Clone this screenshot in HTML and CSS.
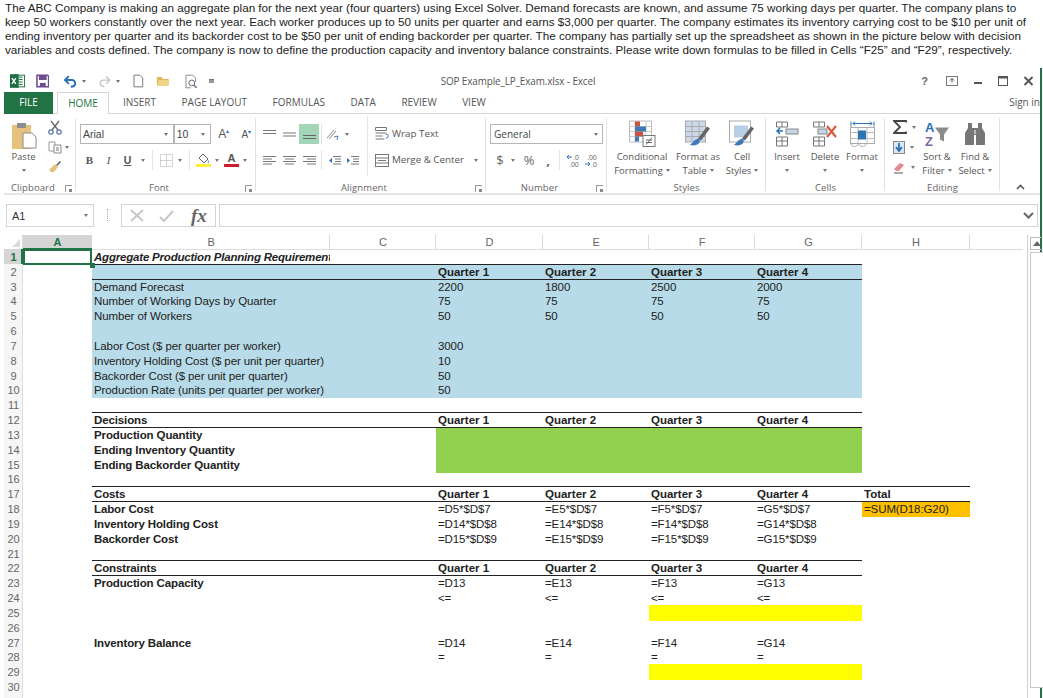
FILE: index.html
```html
<!DOCTYPE html>
<html lang="en">
<head>
<meta charset="utf-8">
<title>SOP Example</title>
<link rel="stylesheet" href="styles.css">
</head>
<body>
<p class="question">The ABC Company is making an aggregate plan for the next year (four quarters) using Excel Solver. Demand forecasts are known, and assume 75 working days per quarter. The company plans to keep 50 workers constantly over the next year. Each worker produces up to 50 units per quarter and earns $3,000 per quarter. The company estimates its inventory carrying cost to be $10 per unit of ending inventory per quarter and its backorder cost to be $50 per unit of ending backorder per quarter. The company has partially set up the spreadsheet as shown in the picture below with decision variables and costs defined. The company is now to define the production capacity and inventory balance constraints. Please write down formulas to be filled in Cells “F25” and “F29”, respectively.</p>
<div class="window">
  <div class="titlebar">
    <div class="qat">
      <svg class="q-excel" width="16" height="14" viewBox="0 0 16 14"><rect x="5" y="1" width="10" height="12" fill="#fff" stroke="#217346"/><path d="M9 3h4M9 5.500h4M9 8h4M9 10.500h4" stroke="#217346"/><rect width="9" height="14" fill="#1d6f42"/><path d="M2 4l4 6M6 4l-4 6" stroke="#fff" stroke-width="1.400"/></svg>
      <svg class="q-save" width="14" height="14" viewBox="0 0 14 14"><path d="M1 1h11l1 1v11H1z" fill="#fff" stroke="#6b4c8c" stroke-width="1.600"/><path d="M3 1h8v5H3z" fill="#6b4c8c"/><path d="M4 9h6v4H4z" fill="#6b4c8c"/></svg>
      <svg class="q-undo" width="14" height="13" viewBox="0 0 14 13"><path d="M6 1L2 5l4 4" fill="none" stroke="#2a71b8" stroke-width="2"/><path d="M2.500 5H9c5 0 5 7-1 7" fill="none" stroke="#2a71b8" stroke-width="2"/></svg>
      <span class="caret q-c1"></span>
      <svg class="q-redo" width="13" height="13" viewBox="0 0 14 13"><path d="M8 1l4 4-4 4" fill="none" stroke="#c4c4c4" stroke-width="1.600"/><path d="M11.500 5H5c-5 0-5 7 1 7" fill="none" stroke="#c4c4c4" stroke-width="1.600"/></svg>
      <span class="caret q-c2"></span>
      <svg class="q-new" width="11" height="14" viewBox="0 0 11 14"><path d="M1 1h6l3 3v9H1z" fill="#fff" stroke="#777"/></svg>
      <svg class="q-open" width="15" height="12" viewBox="0 0 15 12"><path d="M1 2h5l1 2h6v7H1z" fill="#e0b75c"/><path d="M3 5h11l-2 6H1z" fill="#f0d48a"/></svg>
      <svg class="q-print" width="13" height="15" viewBox="0 0 13 15"><path d="M1 1h7l3 3v4M1 1v13h5" fill="#fff" stroke="#888"/><circle cx="7" cy="9" r="3" fill="#fff" stroke="#667"/><path d="M9 11l3 3" stroke="#667" stroke-width="1.500"/></svg>
      <span class="q-more"></span>
    </div>
    <div class="doc-title">SOP Example_LP_Exam.xlsx - Excel</div>
    <div class="win-ctrl">
      <span class="help">?</span>
      <svg width="12" height="10" viewBox="0 0 12 10"><rect x=".5" y=".5" width="11" height="9" fill="none" stroke="#777"/><path d="M6 2.500v4M4 4.500l2-2 2 2" stroke="#555" fill="none"/></svg>
      <svg width="10" height="10" viewBox="0 0 10 10"><path d="M1 7h8" stroke="#555" stroke-width="2"/></svg>
      <svg width="10" height="10" viewBox="0 0 10 10"><rect x=".5" y=".5" width="9" height="9" fill="none" stroke="#555"/><path d="M0 1.500h10" stroke="#555" stroke-width="2"/></svg>
      <svg width="11" height="10" viewBox="0 0 11 10"><path d="M1.500 1l8 8M9.500 1l-8 8" stroke="#555" stroke-width="1.800"/></svg>
    </div>
  </div>
  <div class="tabs">
    <div class="tab file">FILE</div>
    <div class="tab home">HOME</div>
    <div class="tab first">INSERT</div>
    <div class="tab">PAGE LAYOUT</div>
    <div class="tab">FORMULAS</div>
    <div class="tab">DATA</div>
    <div class="tab">REVIEW</div>
    <div class="tab">VIEW</div>
    <div class="signin">Sign in</div>
  </div>
  <div class="ribbon">
    <section class="group g-clip">
      <div class="gbody clip-body">
        <div class="big paste">
          <svg class="big-ico" width="26" height="28" viewBox="0 0 26 28"><rect x="1" y="3" width="19" height="24" fill="#e6c27e"/><rect x="6" y="1" width="9" height="5" fill="#8d8d8d"/><path d="M12 11h9l4 4v11H12z" fill="#fff" stroke="#8c8c8c"/></svg>
          <span>Paste</span>
          <span class="caret solo"></span>
        </div>
        <div class="clip-tools">
          <svg width="14" height="15" viewBox="0 0 14 15"><path d="M3 1l7 9M11 1L4 10" stroke="#666" stroke-width="1.300"/><circle cx="3" cy="12" r="2.200" fill="none" stroke="#5377a8" stroke-width="1.200"/><circle cx="11" cy="12" r="2.200" fill="none" stroke="#5377a8" stroke-width="1.200"/></svg>
          <div class="copy-line"><svg width="14" height="13" viewBox="0 0 14 13"><path d="M1 1h6v9H1z" fill="#fff" stroke="#999"/><path d="M6 4h7v8H6z" fill="#fff" stroke="#888"/><path d="M8 7h3M8 9h3" stroke="#777"/></svg><span class="caret"></span></div>
          <svg width="14" height="13" viewBox="0 0 14 13"><path d="M8 5l4-4 1 1-4 4z" fill="#555"/><path d="M1 10l6-6 3 3-4 5H3z" fill="#e5c07b"/></svg>
        </div>
      </div>
      <div class="glabel launch"><span>Clipboard</span><i class="launcher"></i></div>
    </section>

    <section class="group g-font">
      <div class="gbody two-rows font-body">
        <div class="r1">
          <div class="combo font-name"><span>Arial</span><span class="caret"></span></div>
          <div class="combo font-size"><span>10</span><span class="caret"></span></div>
          <div class="grow-a">A<sup>▴</sup></div>
          <div class="grow-a small-a">A<sup>▾</sup></div>
        </div>
        <div class="r2">
          <b class="fb">B</b><i class="fb fi">I</i><u class="fb">U</u><span class="fa"><span class="caret"></span></span>
          <span class="vsep"></span>
          <svg class="f-border" width="13" height="13" viewBox="0 0 13 13"><path d="M.5.500h12v12H.5zM6.500.5v12M.5 6.500h12" fill="none" stroke="#aaa" stroke-dasharray="1 1"/></svg><span class="fa"><span class="caret"></span></span>
          <span class="vsep"></span>
          <div class="f-fill"><svg width="13" height="11" viewBox="0 0 13 11"><path d="M6 1l5 5-4 4-5-5z" fill="#fff" stroke="#666"/><path d="M11 7c1 1 1.500 2 .8 3-1 .5-1.500-1-.8-3z" fill="#6a9bd1"/></svg><span class="bar yellowbar"></span></div><span class="fa"><span class="caret"></span></span>
          <div class="f-color"><span class="ca">A</span><span class="bar redbar"></span></div><span class="fa"><span class="caret"></span></span>
        </div>
      </div>
      <div class="glabel launch"><span>Font</span><i class="launcher"></i></div>
    </section>

    <section class="group g-align">
      <div class="gbody align-body">
        <div class="two-rows align-left">
          <div class="r1">
            <span class="ab"><svg width="13" height="11" viewBox="0 0 13 11"><path d="M0 1.500h13M0 4.500h13" stroke="#777"/></svg></span>
            <span class="ab"><svg width="13" height="11" viewBox="0 0 13 11"><path d="M0 4h13M0 7h13" stroke="#777"/></svg></span>
            <span class="ab on"><svg width="13" height="11" viewBox="0 0 13 11"><path d="M0 6.500h13M0 9.500h13" stroke="#666"/></svg></span>
            <span class="vsep tall"></span>
            <span class="ab orient"><svg width="14" height="13" viewBox="0 0 14 13"><path d="M1 10L8 2M3 11l7-8" stroke="#888"/><path d="M8 9l4-1-1 4" fill="none" stroke="#5377a8"/></svg></span><span class="fa"><span class="caret"></span></span>
          </div>
          <div class="r2">
            <span class="ab"><svg width="13" height="9" viewBox="0 0 13 9"><path d="M0 .5h13M0 3h9M0 5.500h13M0 8h9" stroke="#777"/></svg></span>
            <span class="ab"><svg width="13" height="9" viewBox="0 0 13 9"><path d="M0 .5h13M2 3h9M0 5.500h13M2 8h9" stroke="#777"/></svg></span>
            <span class="ab"><svg width="13" height="9" viewBox="0 0 13 9"><path d="M0 .5h13M4 3h9M0 5.500h13M4 8h9" stroke="#777"/></svg></span>
            <span class="vsep tall"></span>
            <span class="ab indent"><svg width="13" height="9" viewBox="0 0 13 9"><path d="M5 .5h8M7 3h6M7 5.500h6M5 8h8" stroke="#777"/><path d="M4 2L1 4.500 4 7z" fill="#2a71b8"/></svg></span>
            <span class="ab indent"><svg width="13" height="9" viewBox="0 0 13 9"><path d="M5 .5h8M7 3h6M7 5.500h6M5 8h8" stroke="#777"/><path d="M1 2l3 2.500L1 7z" fill="#2a71b8"/></svg></span>
          </div>
        </div>
        <div class="two-rows align-right">
          <div class="r1 wrap"><svg width="15" height="14" viewBox="0 0 15 14"><path d="M.5.500h11v3H.5zM.5 6h11M.5 9h7M.5 12h9" fill="none" stroke="#777"/><path d="M11 7c3 0 3 4 0 4" fill="none" stroke="#2a71b8"/></svg><span>Wrap Text</span></div>
          <div class="r2 wrap"><svg width="15" height="13" viewBox="0 0 15 13"><rect x=".5" y=".5" width="13" height="12" fill="#fff" stroke="#777"/><path d="M.5 4h13M.5 9h13M3 6.500h8" stroke="#777"/></svg><span>Merge &amp; Center</span><span class="caret merge-c"></span></div>
        </div>
      </div>
      <div class="glabel launch"><span>Alignment</span><i class="launcher"></i></div>
    </section>

    <section class="group g-num">
      <div class="gbody two-rows num-body">
        <div class="r1"><div class="combo general"><span>General</span><span class="caret"></span></div></div>
        <div class="r2 num-row">
          <span class="nb dollar">$</span><span class="fa"><span class="caret"></span></span>
          <span class="nb pct">%</span>
          <span class="nb comma">,</span>
          <span class="vsep"></span>
          <svg class="dec" width="14" height="13" viewBox="0 0 14 13"><path d="M6 3H1M3 1L1 3l2 2" fill="none" stroke="#2a71b8"/><text x="7" y="6" class="dtxt">.0</text><text x="3" y="12.500" class="dtxt">.00</text></svg>
          <svg class="dec" width="14" height="13" viewBox="0 0 14 13"><text x="3" y="6" class="dtxt">.00</text><path d="M1 10h5M4 8l2 2-2 2" fill="none" stroke="#2a71b8"/><text x="7" y="12.500" class="dtxt">.0</text></svg>
        </div>
      </div>
      <div class="glabel launch"><span>Number</span><i class="launcher"></i></div>
    </section>

    <section class="group g-styles">
      <div class="gbody big-row">
        <div class="big w66">
          <svg class="big-ico" width="27" height="27" viewBox="0 0 27 27"><path d="M.5.500h22v21H.5z" fill="#fff" stroke="#bbb"/><path d="M6 .5v21M17 .5v21M.5 6h22M.5 11h22M.5 16h22" stroke="#ccc"/><rect x="6" y="1" width="5" height="5" fill="#c8533f"/><rect x="6" y="6" width="11" height="5" fill="#3f7ab8"/><rect x="6" y="11" width="8" height="5" fill="#c8533f"/><rect x="6" y="16" width="4" height="5" fill="#3f7ab8"/><rect x="14" y="15" width="12" height="11" fill="#fff" stroke="#777"/><path d="M17 24l6-7M17 19.500h6M17 22h6" stroke="#666" fill="none"/></svg>
          <span>Conditional</span><span>Formatting<i class="caret inl"></i></span>
        </div>
        <div class="big w46">
          <svg class="big-ico" width="27" height="27" viewBox="0 0 27 27"><rect x=".5" y=".5" width="20" height="21" fill="#ccd9ea" stroke="#aaa"/><path d="M7 1v20M14 1v20M1 6h20M1 11h20M1 16h20" stroke="#aaa"/><path d="M25 8L16 20l-3-2 9-12z" fill="#666"/><path d="M14 18c2 3 0 7-6 7-2 0-3-1-3-1 3-1 3-5 9-6z" fill="#3f7ab8"/></svg>
          <span>Format as</span><span>Table<i class="caret inl"></i></span>
        </div>
        <div class="big w42">
          <svg class="big-ico" width="27" height="27" viewBox="0 0 27 27"><rect x=".5" y=".5" width="21" height="21" fill="#fff" stroke="#aaa"/><rect x="5" y="5" width="14" height="12" fill="#b9cde6"/><path d="M25 8L16 20l-3-2 9-12z" fill="#666"/><path d="M14 18c2 3 0 7-6 7-2 0-3-1-3-1 3-1 3-5 9-6z" fill="#3f7ab8"/></svg>
          <span>Cell</span><span>Styles<i class="caret inl"></i></span>
        </div>
      </div>
      <div class="glabel"><span>Styles</span></div>
    </section>

    <section class="group g-cells">
      <div class="gbody big-row">
        <div class="big w38">
          <svg class="big-ico" width="24" height="26" viewBox="0 0 24 26"><path d="M1.500 1h11v5h-11zM7 1v5M1.500 16h11v9h-11zM1.500 20h11M7 16v9" fill="none" stroke="#777"/><path d="M8 10H2M5 7l-3 3 3 3" fill="none" stroke="#2a71b8" stroke-width="1.500"/><rect x="11" y="8" width="12" height="5" fill="#c5d4e6" stroke="#888"/></svg>
          <span>Insert</span><span class="caret solo"></span>
        </div>
        <div class="big w38">
          <svg class="big-ico" width="26" height="26" viewBox="0 0 26 26"><path d="M1.500 1h11v5h-11zM7 1v5M1.500 16h11v9h-11zM1.500 20h11M7 16v9" fill="none" stroke="#777"/><rect x="6" y="8" width="9" height="5" fill="#c5d4e6" stroke="#888"/><path d="M15 5l9 11M24 5l-9 11" stroke="#d9563c" stroke-width="2"/></svg>
          <span>Delete</span><span class="caret solo"></span>
        </div>
        <div class="big w36">
          <svg class="big-ico" width="25" height="27" viewBox="0 0 25 27"><path d="M1 1v5M24 1v5M3 3h19M3 3l2-2M3 3l2 2M22 3l-2-2M22 3l-2 2" fill="none" stroke="#2a71b8"/><rect x=".5" y="7" width="24" height="16" fill="#fff" stroke="#aaa"/><path d="M8 7v16M17 7v16M1 12h23M1 18h23" stroke="#bbb"/><rect x="8" y="10" width="8" height="9" fill="#2e75b6"/><path d="M1 23c0 4 7 4 7 0M9 23c0 4 7 4 7 0" fill="none" stroke="#aaa"/></svg>
          <span>Format</span><span class="caret solo"></span>
        </div>
      </div>
      <div class="glabel"><span>Cells</span></div>
    </section>

    <section class="group g-edit">
      <div class="gbody big-row edit-body">
        <div class="edit-tools">
          <div class="et"><svg width="14" height="14" viewBox="0 0 14 14"><path d="M13 2.500V1H1l6 6-6 6h12v-1.500" fill="none" stroke="#444" stroke-width="1.800"/></svg><span class="caret"></span></div>
          <div class="et"><svg width="12" height="13" viewBox="0 0 12 13"><rect x=".5" y=".5" width="11" height="12" fill="#dbe6f2" stroke="#888"/><path d="M6 2v7M3 6l3 4 3-4" fill="none" stroke="#2a71b8" stroke-width="1.800"/></svg><span class="caret"></span></div>
          <div class="et"><svg width="13" height="13" viewBox="0 0 13 13"><path d="M1 8l6-6 4 2-5 6H3z" fill="#e58a92"/><path d="M1 12h9" stroke="#555"/></svg><span class="caret"></span></div>
        </div>
        <div class="big w38">
          <svg class="big-ico" width="26" height="27" viewBox="0 0 26 27"><text x="1" y="11.500" class="az a-t">A</text><text x="1" y="25" class="az z-t">Z</text><path d="M11 7h14l-5 7v7l-4-2v-5z" fill="#8c8c8c"/></svg>
          <span>Sort &amp;</span><span>Filter<i class="caret inl"></i></span>
        </div>
        <div class="big w38">
          <svg class="big-ico" width="24" height="26" viewBox="0 0 24 26"><path d="M5 2h4v5h6V2h4v5l3 5v12h-9V14h-2v10H2V12l3-5z" fill="#777"/><path d="M12 9v4" stroke="#fff"/></svg>
          <span>Find &amp;</span><span>Select<i class="caret inl"></i></span>
        </div>
      </div>
      <div class="glabel"><span>Editing</span></div>
    </section>
    <div class="collapse"><svg width="9" height="6" viewBox="0 0 9 6"><path d="M1 5l3.500-3.500L8 5" fill="none" stroke="#555" stroke-width="1.600"/></svg></div>
  </div>

  <div class="formula">
    <div class="namebox"><span>A1</span><span class="caret"></span></div>
    <div class="grip"></div>
    <div class="fx-box">
      <svg width="14" height="13" viewBox="0 0 14 13"><path d="M1 1l12 11M13 1L1 12" stroke="#c6c6c6" stroke-width="1.800"/></svg>
      <svg width="15" height="12" viewBox="0 0 15 12"><path d="M1 7l4 4 9-10" fill="none" stroke="#c6c6c6" stroke-width="2"/></svg>
      <span class="fx">fx</span>
    </div>
    <div class="finput"><svg width="11" height="7" viewBox="0 0 11 7"><path d="M1 1l4.500 4.500L10 1" fill="none" stroke="#666" stroke-width="2"/></svg></div>
  </div>

  <div class="sheet">
    <div class="cells">
      <div class="row heads"><div class="corner"><i></i></div><div class="ch sel">A</div><div class="ch">B</div><div class="ch">C</div><div class="ch">D</div><div class="ch">E</div><div class="ch">F</div><div class="ch">G</div><div class="ch">H</div><div class="ch none"></div></div>
      <div class="row"><div class="rh sel">1</div><div class="ca1"><i class="handle"></i></div><div class="title-cell">Aggregate Production Planning Requirement</div></div>
      <div class="row"><div class="rh">2</div><div></div><div class="bl tl"></div><div class="bl tl"></div><div class="bl tl bd">Quarter 1</div><div class="bl tl bd">Quarter 2</div><div class="bl tl bd">Quarter 3</div><div class="bl tl bd">Quarter 4</div></div>
      <div class="row"><div class="rh">3</div><div></div><div class="bl tl">Demand Forecast</div><div class="bl tl"></div><div class="bl tl">2200</div><div class="bl tl">1800</div><div class="bl tl">2500</div><div class="bl tl">2000</div></div>
      <div class="row"><div class="rh">4</div><div></div><div class="bl">Number of Working Days by Quarter</div><div class="bl"></div><div class="bl">75</div><div class="bl">75</div><div class="bl">75</div><div class="bl">75</div></div>
      <div class="row"><div class="rh">5</div><div></div><div class="bl">Number of Workers</div><div class="bl"></div><div class="bl">50</div><div class="bl">50</div><div class="bl">50</div><div class="bl">50</div></div>
      <div class="row"><div class="rh">6</div><div></div><div class="bl"></div><div class="bl"></div><div class="bl"></div><div class="bl"></div><div class="bl"></div><div class="bl"></div></div>
      <div class="row"><div class="rh">7</div><div></div><div class="bl">Labor Cost ($ per quarter per worker)</div><div class="bl"></div><div class="bl">3000</div><div class="bl"></div><div class="bl"></div><div class="bl"></div></div>
      <div class="row"><div class="rh">8</div><div></div><div class="bl">Inventory Holding Cost ($ per unit per quarter)</div><div class="bl"></div><div class="bl">10</div><div class="bl"></div><div class="bl"></div><div class="bl"></div></div>
      <div class="row"><div class="rh">9</div><div></div><div class="bl">Backorder Cost ($ per unit per quarter)</div><div class="bl"></div><div class="bl">50</div><div class="bl"></div><div class="bl"></div><div class="bl"></div></div>
      <div class="row"><div class="rh">10</div><div></div><div class="bl">Production Rate (units per quarter per worker)</div><div class="bl"></div><div class="bl">50</div><div class="bl"></div><div class="bl"></div><div class="bl"></div></div>
      <div class="row"><div class="rh">11</div></div>
      <div class="row"><div class="rh">12</div><div></div><div class="tl bd lbl">Decisions</div><div class="tl"></div><div class="tl bd">Quarter 1</div><div class="tl bd">Quarter 2</div><div class="tl bd">Quarter 3</div><div class="tl bd">Quarter 4</div></div>
      <div class="row"><div class="rh">13</div><div></div><div class="tl bd lbl">Production Quantity</div><div class="tl"></div><div class="gr tl"></div><div class="gr tl"></div><div class="gr tl"></div><div class="gr tl"></div></div>
      <div class="row"><div class="rh">14</div><div></div><div class="bd lbl">Ending Inventory Quantity</div><div></div><div class="gr"></div><div class="gr"></div><div class="gr"></div><div class="gr"></div></div>
      <div class="row"><div class="rh">15</div><div></div><div class="bd lbl">Ending Backorder Quantity</div><div></div><div class="gr"></div><div class="gr"></div><div class="gr"></div><div class="gr"></div></div>
      <div class="row"><div class="rh">16</div></div>
      <div class="row"><div class="rh">17</div><div></div><div class="tl bd lbl">Costs</div><div class="tl"></div><div class="tl bd">Quarter 1</div><div class="tl bd">Quarter 2</div><div class="tl bd">Quarter 3</div><div class="tl bd">Quarter 4</div><div class="tl bd">Total</div></div>
      <div class="row"><div class="rh">18</div><div></div><div class="tl bd lbl">Labor Cost</div><div class="tl"></div><div class="tl">=D5*$D$7</div><div class="tl">=E5*$D$7</div><div class="tl">=F5*$D$7</div><div class="tl">=G5*$D$7</div><div class="tl or">=SUM(D18:G20)</div></div>
      <div class="row"><div class="rh">19</div><div></div><div class="bd lbl">Inventory Holding Cost</div><div></div><div>=D14*$D$8</div><div>=E14*$D$8</div><div>=F14*$D$8</div><div>=G14*$D$8</div></div>
      <div class="row"><div class="rh">20</div><div></div><div class="bd lbl">Backorder Cost</div><div></div><div>=D15*$D$9</div><div>=E15*$D$9</div><div>=F15*$D$9</div><div>=G15*$D$9</div></div>
      <div class="row"><div class="rh">21</div></div>
      <div class="row"><div class="rh">22</div><div></div><div class="tl bd lbl">Constraints</div><div class="tl"></div><div class="tl bd">Quarter 1</div><div class="tl bd">Quarter 2</div><div class="tl bd">Quarter 3</div><div class="tl bd">Quarter 4</div></div>
      <div class="row"><div class="rh">23</div><div></div><div class="tl bd lbl">Production Capacity</div><div class="tl"></div><div class="tl">=D13</div><div class="tl">=E13</div><div class="tl">=F13</div><div class="tl">=G13</div></div>
      <div class="row"><div class="rh">24</div><div></div><div></div><div></div><div>&lt;=</div><div>&lt;=</div><div>&lt;=</div><div>&lt;=</div></div>
      <div class="row"><div class="rh">25</div><div></div><div></div><div></div><div></div><div></div><div class="ye"></div><div class="ye"></div></div>
      <div class="row"><div class="rh">26</div></div>
      <div class="row"><div class="rh">27</div><div></div><div class="bd lbl">Inventory Balance</div><div></div><div>=D14</div><div>=E14</div><div>=F14</div><div>=G14</div></div>
      <div class="row"><div class="rh">28</div><div></div><div></div><div></div><div>=</div><div>=</div><div>=</div><div>=</div></div>
      <div class="row"><div class="rh">29</div><div></div><div></div><div></div><div></div><div></div><div class="ye"></div><div class="ye"></div></div>
      <div class="row"><div class="rh">30</div></div>
      <div class="row"><div class="rh"></div></div>
    </div>
    <div class="vscroll"><div class="up"><svg width="8" height="5" viewBox="0 0 8 5"><path d="M4 0l4 5H0z" fill="#666"/></svg></div><div class="thumb"></div></div>
  </div>
</div>
</body>
</html>
```
FILE: styles.css
```css
* { box-sizing: border-box; }
html, body { margin: 0; padding: 0; height: 698px; overflow: hidden; background: #fff; }
body { font-family: "Open Sans", "Noto Sans", sans-serif; color: #444; }
.question { margin: 0; padding: 1px 0 0 5px; width: 1034px; height: 68px; font: 11.700px/14px "Liberation Sans", Arial, sans-serif; color: #222; }
.window { margin: 0 0 0 4px; width: 1038px; height: 630px; border-right: 2px solid #217346; }

.titlebar { display: flex; height: 24px; align-items: center; padding-top: 2px; }
.qat { width: 210px; display: flex; align-items: center; padding-left: 6px; flex: none; }
.q-save { margin-left: 10px; } .q-undo { margin-left: 14px; } .q-c1 { margin-left: 5px; }
.q-redo { margin-left: 13px; } .q-c2 { margin-left: 5px; } .q-new { margin-left: 13px; }
.q-open { margin-left: 12px; } .q-print { margin-left: 14px; }
.q-more { margin-left: 12px; width: 5px; height: 4px; border-top: 1px solid #777; border-bottom: 3px solid #999; }
.doc-title { width: 608px; text-align: center; font-size: 9.900px; color: #555; letter-spacing: -.1px; }
.win-ctrl { flex: 1; display: flex; justify-content: flex-end; align-items: center; gap: 15px; padding-right: 6px; }
.help { font: bold 11px "Liberation Sans", sans-serif; color: #666; margin-right: 3px; }

.tabs { display: flex; height: 22px; border-bottom: 1px solid #d6d6d6; font-size: 10px; line-height: 21px; color: #555; }
.tab { margin-left: 25.500px; white-space: nowrap; }
.tab.file { margin-left: 0; width: 49px; background: #217346; color: #fff; text-align: center; height: 22px; }
.tab.home { margin-left: 4px; width: 52px; height: 22px; background: #fff; border: 1px solid #d6d6d6; border-bottom: 0; color: #217346; text-align: center; }
.tab.first { margin-left: 14px; }
.signin { margin-left: auto; }

.ribbon { display: flex; height: 81px; border-bottom: 2px solid #e6e6e6; font-size: 9.500px; line-height: 14px; color: #555; }
.group { display: flex; flex-direction: column; position: relative; height: 79px; flex: none; padding-top: 2px; }
.group::after { content: ""; position: absolute; right: 0; top: 4px; width: 1px; height: 73px; background: #e2e2e2; }
.gbody { height: 66px; flex: none; }
.glabel { height: 12px; display: flex; align-items: center; justify-content: center; color: #666; letter-spacing: .1px; }
.glabel span { flex: 1; text-align: center; }
.launcher { width: 7px; height: 7px; margin: 0 4px 0 3px; border: 1px solid #999; border-width: 1px 0 0 1px; position: relative; }
.launcher::after { content: ""; position: absolute; right: 0; bottom: 0; width: 3px; height: 3px; background: #888; }
.g-clip { width: 72px; } .g-font { width: 180px; } .g-align { width: 230px; }
.g-num { width: 121px; } .g-styles { width: 159px; } .g-cells { width: 119px; } .g-edit { width: 115px; }

.caret { display: inline-block; width: 0; height: 0; border: 2.500px solid transparent; border-top: 3px solid #777; border-bottom: 0; flex: none; }
.caret.inl { margin-left: 3px; vertical-align: 2px; }
.caret.solo { margin-top: 5px; }

.big { display: flex; flex-direction: column; align-items: center; white-space: nowrap; padding-top: 4px; flex: none; }
.big-ico { height: 28px; margin-bottom: 2px; flex: none; }
.big-row { display: flex; padding-left: 2px; }
.w66 { width: 66px; } .w46 { width: 46px; } .w42 { width: 42px; } .w38 { width: 38px; } .w36 { width: 36px; }

.clip-body { display: flex; padding-left: 3px; }
.paste { width: 33px; padding-top: 6px; }
.paste .big-ico { margin-bottom: 0; margin-left: 1px; }
.clip-tools { display: flex; flex-direction: column; padding: 4px 0 0 8px; gap: 6px; }
.copy-line { display: flex; align-items: center; gap: 3px; }

.two-rows { display: flex; flex-direction: column; }
.r1 { display: flex; align-items: center; height: 20px; margin-top: 8px; flex: none; }
.r2 { display: flex; align-items: center; height: 20px; margin-top: 6px; flex: none; }
.font-body { padding-left: 4px; }
.combo { display: flex; align-items: center; justify-content: space-between; height: 20px; border: 1px solid #b5b5b5; padding: 0 5px 0 2px; font-size: 9.500px; color: #444; background: #fff; }
.font-name { width: 96px; font-family: "Liberation Sans", sans-serif; font-size: 10.500px; }
.font-size { width: 38px; font-family: "Liberation Sans", sans-serif; font-size: 10.500px; }
.grow-a { width: 20px; margin-left: 3px; text-align: center; font: 12px "Liberation Sans", sans-serif; color: #555; }
.small-a { font-size: 10px; }
.grow-a sup { font-size: 6px; line-height: 0; color: #2a71b8; }
.fb { width: 19px; text-align: center; font: bold 11px "Liberation Serif", serif; color: #555; flex: none; }
.fb.fi { font-style: italic; font-weight: 400; }
u.fb { font-family: "Liberation Sans", sans-serif; font-size: 10.500px; }
.fa { width: 12px; display: flex; justify-content: center; flex: none; }
.vsep { width: 1px; height: 20px; background: #e4e4e4; margin: 0 3px; flex: none; }
.f-border { margin: 0 1px 0 4px; }
.f-fill, .f-color { width: 15px; display: flex; flex-direction: column; align-items: center; margin-left: 3px; }
.f-color { margin-left: 1px; }
.bar { display: block; width: 15px; height: 3px; }
.yellowbar { background: #ffee3a; } .redbar { background: #d01c2a; }
.ca { font: bold 11px/11px "Liberation Sans", sans-serif; color: #555; }

.align-body { display: flex; padding-left: 3px; }
.align-left { width: 109px; border-right: 1px solid #e4e4e4; height: 60px; }
.ab { width: 20px; height: 20px; display: flex; align-items: center; justify-content: center; flex: none; }
.ab.on { background: #a3d5b6; }
.vsep.tall { margin: 0 3px 0 2px; }
.ab.orient { width: 16px; }
.ab.indent { width: 18px; }
.align-right { padding-left: 7px; }
.wrap { gap: 2px; white-space: nowrap; font-size: 9.800px; color: #555; }
.merge-c { margin-left: 8px; }

.num-body { padding-left: 4px; }
.general { width: 113px; padding: 0 4px 0 3px; font-size: 10px; }
.num-row { padding-left: 3px; }
.nb { flex: none; text-align: center; color: #666; }
.dollar { width: 14px; font-size: 13px; }
.pct { width: 18px; margin-left: 1px; font-size: 13px; }
.comma { width: 14px; font-weight: 700; font-size: 13px; line-height: 5px; margin-left: 3px; }
.num-row .vsep { margin: 0 6px 0 4px; }
.dec { margin-right: 4px; flex: none; }
.dtxt { font: 7px "Liberation Sans", sans-serif; fill: #666; }

.edit-body { padding-left: 8px; }
.edit-tools { width: 25px; padding-top: 4px; display: flex; flex-direction: column; gap: 6px; }
.et { display: flex; align-items: center; gap: 5px; height: 14px; }
.az { font: bold 13px "Liberation Sans", sans-serif; }
.a-t { fill: #2a71b8; } .z-t { fill: #8464a8; }
.collapse { flex: 1; display: flex; align-items: flex-end; justify-content: center; padding-bottom: 3px; }

.formula { display: flex; height: 23px; margin-top: 9px; }
.namebox { width: 88px; margin-left: 2px; border: 1px solid #d4d4d4; display: flex; align-items: center; justify-content: space-between; padding: 0 5px; font: 11px "Liberation Sans", sans-serif; color: #333; }
.grip { width: 27px; }
.grip::after { content: ""; display: block; width: 1px; height: 12px; margin: 5px auto 0; border-left: 1px dotted #aaa; }
.fx-box { width: 95px; border: 1px solid #d4d4d4; display: flex; align-items: center; padding-left: 8px; gap: 15px; }
.fx { font: italic 700 19px "Liberation Serif", serif; color: #666; margin-left: 2px; }
.finput { flex: 1; margin: 0 2px 0 3px; border: 1px solid #d4d4d4; display: flex; align-items: center; justify-content: flex-end; padding-right: 3px; }

.sheet { display: flex; margin-top: 8px; height: 463px; }
.cells { width: 1019px; flex: none; overflow: hidden; }
.row { display: grid; grid-template-columns: 19px 69px 238px 106px 107px 106px 106px 107px 108px 53px; height: 14.830px; font: 11.500px/15px "Liberation Sans", Arial, sans-serif; color: #222; white-space: nowrap; letter-spacing: -.1px; }
.row > div { padding: 1px 0 0 2px; min-width: 0; }
.row.heads { height: 14px; color: #666; text-align: center; font-size: 11px; }
.row.heads > div { padding: 0; box-shadow: inset -1px -1px 0 #dcdcdc; }
.corner i { display: block; width: 0; height: 0; margin: 4px 0 0 8px; border: 4px solid transparent; border-right-color: #dcdcdc; border-bottom-color: #dcdcdc; }
.row.heads > .ch.sel { background: #d5d5d5; color: #217346; font-weight: 700; box-shadow: inset 0 -2px 0 #217346; }
.row.heads > .ch.none { box-shadow: inset 0 -1px 0 #dcdcdc; }
.row > .rh { padding: 1px 0 0; background: #f6f6f6; text-align: center; color: #666; font-size: 11px; box-shadow: inset -1px -1px 0 #dedede; }
.row > .rh.sel { background: #d5d5d5; color: #217346; font-weight: 700; box-shadow: inset -2px 0 0 #217346; }
.ca1 { position: relative; box-shadow: inset 0 0 0 2px #217346; }
.handle { position: absolute; right: -3px; bottom: -3px; width: 5px; height: 5px; background: #217346; }
.row > .title-cell { grid-column: 3; overflow: hidden; font-weight: 700; font-style: italic; letter-spacing: -.2px; }
.bl { background: #b7dbe8; }
.gr { background: #92d050; }
.ye { background: #ffff00; }
.or { background: #ffc000; }
.bd { font-weight: 700; letter-spacing: 0; }
.bd.lbl { letter-spacing: -.12px; }
.row > .tl { box-shadow: inset 0 1px 0 #222; }

.vscroll { flex: none; width: 17px; margin-left: 4px; border-left: 1px solid #d0d0d0; padding-left: 2px; }
.up { height: 13px; border: 1px solid #bbb; display: flex; align-items: center; justify-content: center; margin-top: 2px; }
.thumb { height: 436px; border: 1px solid #c8c8c8; background: #fff; margin-top: 2px; }
```
